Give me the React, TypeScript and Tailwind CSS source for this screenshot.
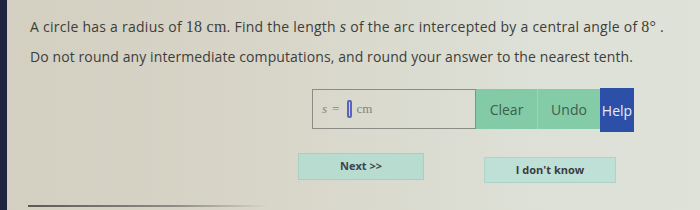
export default function App() {
  const serif = { fontFamily: '"Liberation Serif", "Times New Roman", serif' };
  return (
    <div className="relative w-[700px] h-[210px] overflow-hidden flex bg-[linear-gradient(90deg,#d3cfc1_0%,#d8d6c9_40%,#dde0d6_75%,#dfe2d9_100%)]">
      <div className="w-[7px] h-full bg-[#1f2540] shrink-0" />
      <div className="flex flex-col flex-1 pl-[23px] pt-[17px] text-[#3d3d3a]" style={{ fontFamily: '"Open Sans", "Noto Sans", sans-serif' }}>
        <p className="text-[14px] leading-[20px] tracking-[0.25px] whitespace-nowrap">
          A circle has a radius of <span style={serif} className="text-[16px]">18 cm</span>. Find the length{' '}
          <span style={serif} className="italic text-[16px]">s</span> of the arc intercepted by a central angle of{' '}
          <span style={serif} className="text-[16px]">8°</span> .
        </p>
        <p className="text-[14px] leading-[20px] mt-[10px] tracking-[0.1px] whitespace-nowrap">
          Do not round any intermediate computations, and round your answer to the nearest tenth.
        </p>
        <div className="flex items-stretch ml-[282px] mt-[22px] h-[40px]">
          <div className="w-[164px] border border-[#8a8c86] flex items-center pl-[9px] text-[#80828a] text-[13px]" style={serif}>
            <span className="italic">s</span>
            <span className="ml-[5px]">=</span>
            <span className="w-[5px] h-[18px] rounded-[2px] border-2 border-[#5a64c0] bg-[#c9cdf0] ml-[8px]" />
            <span className="ml-[4px]">cm</span>
          </div>
          <div className="w-[61px] bg-[#82cba6] flex items-center justify-center text-[14px] text-[#3e5e4d]">Clear</div>
          <div className="w-[63px] bg-[#84cca8] border-l border-[#9bd6b8] flex items-center justify-center text-[14px] text-[#3e5e4d]">Undo</div>
          <div className="w-[34px] -my-[1px] mb-[-3px] bg-[#2c50a8] flex items-center justify-center text-[14px] text-[#e8ecf7]">Help</div>
        </div>
        <div className="flex items-start mt-[24px] ml-[268px]">
          <div className="w-[126px] h-[27px] bg-[#b8dcd0] border border-[#a9cfc2] flex items-center justify-center text-[11px] font-bold text-[#3c4550]">Next &gt;&gt;</div>
          <div className="w-[132px] h-[26px] mt-[4px] ml-[60px] bg-[#bfe0d6] border border-[#afd3c7] flex items-center justify-center text-[11px] font-bold text-[#3a3d40]">I don't know</div>
        </div>
      </div>
      <div className="absolute left-[28px] bottom-[3px] w-[240px] h-[2px] bg-[linear-gradient(90deg,#5b5a55,#8c8b84_60%,transparent)]" />
    </div>
  );
}
